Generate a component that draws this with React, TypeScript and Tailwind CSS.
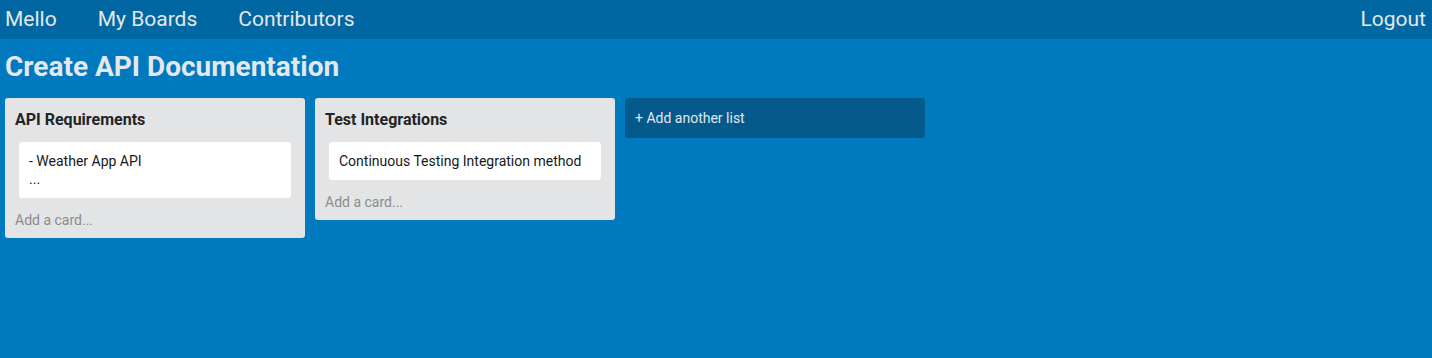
const lists = [
  { title: "API Requirements", cards: [["- Weather App API", "..."]] },
  { title: "Test Integrations", cards: [["Continuous Testing Integration method"]] },
];

export default function App() {
  return (
    <div className="min-h-[358px] bg-[#0079bf] font-['Roboto',sans-serif]">
      <nav className="flex h-[39px] items-center bg-[#0067a3] px-[5px] pb-[1px] text-[21px] leading-[26px] text-[#e4e7ea]">
        <a className="mr-[41px]">Mello</a>
        <a className="mr-[41px]">My Boards</a>
        <a>Contributors</a>
        <a className="ml-auto mr-[1px]">Logout</a>
      </nav>

      <h1 className="px-[5px] pt-[11px] pb-[9px] text-[28px] leading-[34px] font-bold text-[#e4e8ec]">
        Create API Documentation
      </h1>

      <div className="flex items-start gap-[10px] px-[5px] pt-[5px]">
        {lists.map((list) => (
          <div key={list.title} className="w-[300px] rounded-[3px] bg-[#e2e4e6] pb-[7px]">
            <h2 className="px-[10px] pt-[11px] pb-[11px] text-[16px] leading-[22px] font-bold text-[#222426]">
              {list.title}
            </h2>
            {list.cards.map((lines, i) => (
              <div
                key={i}
                className="mx-[14px] mb-[11px] rounded-[3px] bg-white px-[10px] py-[10px] text-[14px] leading-[18px] text-[#17191b]"
              >
                {lines.map((l) => (
                  <div key={l}>{l}</div>
                ))}
              </div>
            ))}
            <p className="px-[10px] text-[14px] leading-[22px] text-[#8c8c8c]">Add a card...</p>
          </div>
        ))}

        <div className="flex h-[40px] w-[300px] items-center rounded-[3px] bg-[#055a8c] px-[10px] text-[14px] text-[#e4e8ec]">
          + Add another list
        </div>
      </div>
    </div>
  );
}
